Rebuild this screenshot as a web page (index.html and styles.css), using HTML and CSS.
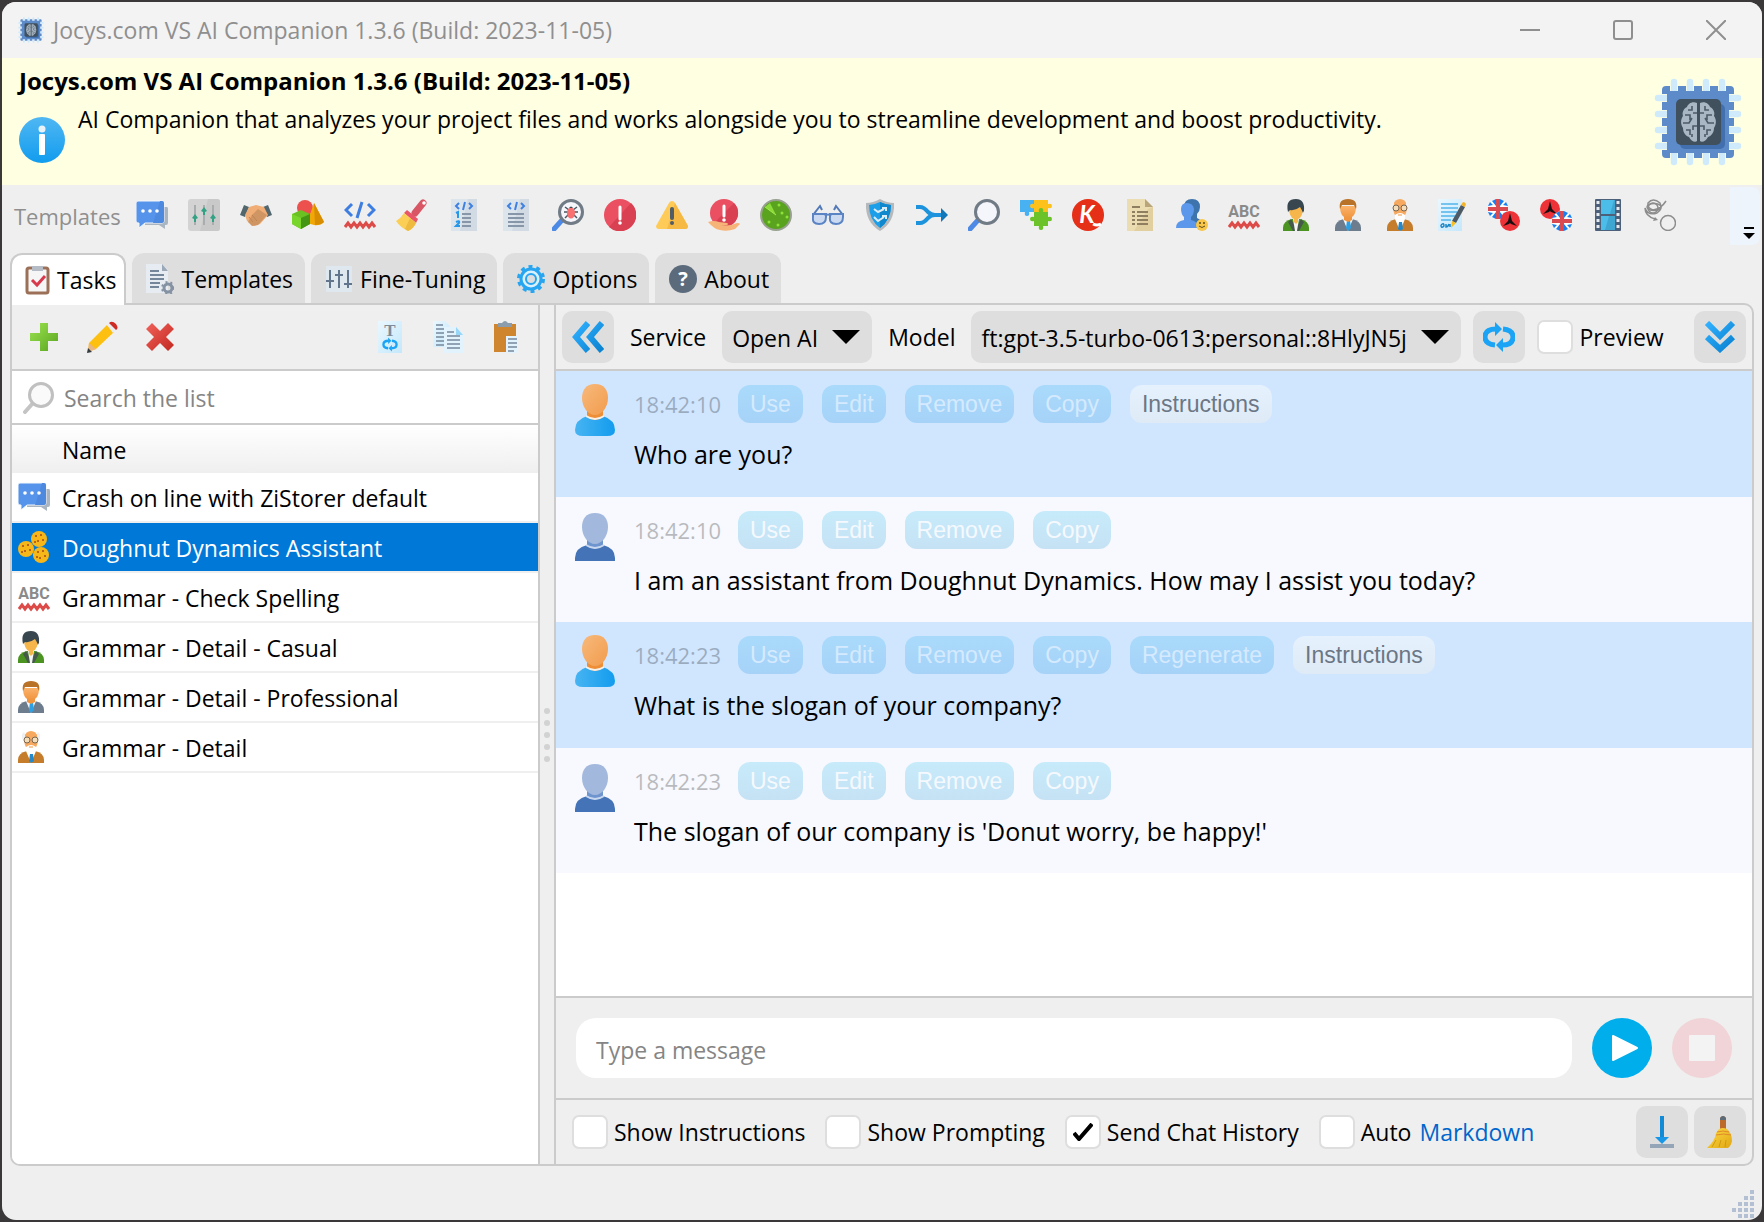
FILE: index.html
```html
<!DOCTYPE html>
<html lang="en">

<head>
    <meta charset="UTF-8">
    <meta name="viewport" content="width=device-width, initial-scale=1.0">
    <title>Jocys.com VS AI Companion</title>
    <link rel="stylesheet" href="styles.css">
</head>

<body>
    <!-- Shared icons -->
    <svg class="sprite" aria-hidden="true">
        <defs>
            <linearGradient id="gInfo" x1="0" y1="0" x2="0" y2="1"><stop offset="0" stop-color="#50b7f3"/><stop offset="1" stop-color="#119cee"/></linearGradient>
            <linearGradient id="gBlue" x1="0" y1="0" x2="1" y2="1"><stop offset="0" stop-color="#2fb0ff"/><stop offset="1" stop-color="#0a82d0"/></linearGradient>
            <linearGradient id="gUser" x1="0" y1="0" x2="1" y2="0"><stop offset="0" stop-color="#47b4f2"/><stop offset="1" stop-color="#139cee"/></linearGradient>
            <linearGradient id="gHead" x1="0" y1="0" x2="1" y2="1"><stop offset="0" stop-color="#f7b97c"/><stop offset="1" stop-color="#f29c4c"/></linearGradient>
            <linearGradient id="gGreen" x1="0" y1="0" x2="1" y2="1"><stop offset="0" stop-color="#9be350"/><stop offset="1" stop-color="#5aa520"/></linearGradient>
            <linearGradient id="gRed" x1="0" y1="0" x2="1" y2="1"><stop offset="0" stop-color="#f1625a"/><stop offset="1" stop-color="#c2271f"/></linearGradient>
            <linearGradient id="gPaper" x1="0" y1="0" x2="1" y2="1"><stop offset="0" stop-color="#eaf7fe"/><stop offset="1" stop-color="#c4e8fc"/></linearGradient>
            <linearGradient id="gFace" x1="0" y1="0" x2="0" y2="1"><stop offset="0" stop-color="#fbb36a"/><stop offset="1" stop-color="#f0953f"/></linearGradient>
            <linearGradient id="gBroom" x1="0" y1="0" x2="1" y2="1"><stop offset="0" stop-color="#ffdc45"/><stop offset="1" stop-color="#e0a613"/></linearGradient>
        </defs>
        <symbol id="chip" viewBox="0 0 88 88">
            <g stroke="#cfebfb" stroke-width="6.5" stroke-linecap="round">
                <path d="M20 4v80M36 4v80M52 4v80M68 4v80M4 20h80M4 36h80M4 52h80M4 68h80"/>
            </g>
            <path d="M12 8h4v5h8V8h8v5h8V8h8v5h8V8h8v5h8V8h4q4 0 4 4v4h-5v8h5v8h-5v8h5v8h-5v8h5v8h-5v8h5v4q0 4-4 4h-4v-5h-8v5h-8v-5h-8v5h-8v-5h-8v5h-8v-5h-8v5h-4q-4 0-4-4v-4h5v-8H8v-8h5v-8H8v-8h5v-8H8v-8h5v-8H8v-4q0-4 4-4z" fill="#5d8bc9"/>
            <rect x="26" y="26" width="45" height="45" rx="5" fill="#426fae"/>
            <rect x="22" y="21" width="45" height="46" rx="5" fill="#40515d"/>
            <path d="M43 25c-5-2-9 1-10 4-4 2-5 6-4 9-3 4-2 9 0 12 0 5 3 8 6 9 2 4 6 6 8 4zM46 25c5-2 9 1 10 4 4 2 5 6 4 9 3 4 2 9 0 12 0 5-3 8-6 9-2 4-6 6-8 4z" fill="#a9b6c3"/>
            <path d="M38 28v4h-4M31 37h5v5M29 45h6l3-5M32 52h4v5M43 35h-4M43 48h-4v4M38 59v-3M51 28v4h4M58 37h-5v5M60 45h-6l-3-5M57 52h-4v5M46 35h4M46 48h4v4M51 59v-3" fill="none" stroke="#4b5b67" stroke-width="1.6"/>
        </symbol>
        <symbol id="chat" viewBox="0 0 32 32">
            <path d="M9 8h22q1 0 1 2v14q0 2-2 2h-1v4l-6-4H9z" fill="#aab5c2"/>
            <path d="M2 2h24q2 0 2 2v18q0 2-2 2H9l-6 5v-5H2q-2 0-2-2V4q0-2 2-2z" fill="#5694ec" stroke="#f3f6fa" stroke-width="1"/>
            <path d="M26 2q2 0 2 2v18q0 2-2 2h-9L24 2z" fill="#4d89df"/>
            <circle cx="7" cy="12" r="1.8" fill="#fff"/><circle cx="14" cy="12" r="1.8" fill="#fff"/><circle cx="21" cy="12" r="1.8" fill="#fff"/>
        </symbol>
        <symbol id="lens" viewBox="0 0 32 32">
            <path d="M2 30l9-10" stroke="#4d8ae6" stroke-width="5" stroke-linecap="round"/>
            <circle cx="19" cy="13" r="11.5" fill="#f4f6fb" stroke="#707b86" stroke-width="3"/>
        </symbol>
        <symbol id="casual" viewBox="0 0 32 32">
            <path d="M3 32v-3q0-7 9-9h8q9 2 9 9v3z" fill="#4b9422"/>
            <path d="M11 20l5 9 5-9 3 3-5 9h-6l-5-9z" fill="#455a4a"/>
            <path d="M13 20h6l-2 12h-2z" fill="#f4f4f4"/>
            <path d="M9 8q0 10 5 12v3l2 2 2-2v-3q5-2 5-12z" fill="#f6b64c"/>
            <path d="M8 13q-3-13 8-13 9 0 8 12-1 1-1 2-1-3-3-6-5 4-10 3z" fill="#38464f"/>
        </symbol>
        <symbol id="suit" viewBox="0 0 32 32">
            <path d="M3 32v-3q0-7 9-9h8q9 2 9 9v3z" fill="#6d7d8e"/>
            <path d="M11 20l5 12 5-12z" fill="#f5f8fb"/>
            <path d="M15 21h3l1 8-3 3-2-3z" fill="#2da0e4"/>
            <path d="M12 15h8v6l-4 2-4-2z" fill="#ef9540"/>
            <path d="M8 7q0 12 8 12t8-12z" fill="url(#gFace)"/>
            <path d="M8 10q-2-10 8-10t8 10l-2-4H10z" fill="#b97329"/>
        </symbol>
        <symbol id="elder" viewBox="0 0 32 32">
            <path d="M3 32v-3q0-7 9-9h8q9 2 9 9v3z" fill="#c57d2c"/>
            <path d="M11 20l5 12 5-12z" fill="#fff"/>
            <path d="M15 23h3l1 7-3 2-2-2z" fill="#2589c9"/>
            <path d="M9 6q0 13 7 13t7-13q-2-6-7-6T9 6z" fill="#f7a960"/>
            <path d="M9 1Q5 4 8 9l2-2V3zM23 1q4 3 1 8l-2-2V3z" fill="#f0f0f0"/>
            <circle cx="12" cy="9" r="3" fill="#f6ddb9" stroke="#776552"/><circle cx="20" cy="9" r="3" fill="#f6ddb9" stroke="#776552"/>
            <path d="M11 16q5-4 10 0 1 6-5 6t-5-6z" fill="#fff"/>
            <path d="M14 16h4" stroke="#f0953f" stroke-width="1"/>
        </symbol>
        <symbol id="userHead" viewBox="0 0 40 52">
            <path d="M0 46q0-10 12-14h16q12 4 12 14 0 6-8 6H8q-8 0-8-6z" fill="url(#gUser)"/>
            <path d="M12 26h16v7q-8 6-16 0z" fill="#ee8f38"/>
            <path d="M11 32q9 6 18 0" fill="none" stroke="#f6f1ea" stroke-width="2"/>
            <path d="M20 0c9 0 13 6 13 14 0 9-6 17-13 17S7 23 7 14C7 6 11 0 20 0z" fill="url(#gHead)"/>
        </symbol>
        <symbol id="botHead" viewBox="0 0 40 48">
            <path d="M0 48v-3q0-10 12-13h16q12 3 12 13v3z" fill="#4573b8"/>
            <path d="M12 26h16v7q-8 6-16 0z" fill="#6f95cf"/>
            <path d="M11 32q9 6 18 0" fill="none" stroke="#c9d8ef" stroke-width="2"/>
            <path d="M20 0c9 0 13 6 13 14 0 9-6 17-13 17S7 23 7 14C7 6 11 0 20 0z" fill="#a3b8dd"/>
        </symbol>
        <symbol id="refresh" viewBox="0 0 32 32">
            <path d="M12 24Q2 23 2 16 2 8 13 8M20 8q10 1 10 8 0 8-11 8" fill="none" stroke="#1ba4f5" stroke-width="5"/>
            <path d="M12 1l7 7-7 7zM20 17l-7 7 7 7z" fill="#1ba4f5"/>
        </symbol>
        <symbol id="flag" viewBox="0 0 20 20">
            <circle cx="10" cy="10" r="10" fill="#fff"/>
            <path d="M4 2l4 5V0zM16 2l-4 5V0zM0 7l5-1-3-3zM20 7l-5-1 3-3zM4 18l4-5v7zM16 18l-4-5v7zM0 13l5 1-3 3zM20 13l-5 1 3 3z" fill="#1680f0"/>
            <path d="M10 0v20M0 10h20" stroke="#d94a51" stroke-width="4"/>
        </symbol>
        <symbol id="trefoil" viewBox="0 0 20 20">
            <circle cx="10" cy="10" r="10" fill="#ee3338"/>
            <path d="M10 2l2 8 5 5-6-2-1-1-1 1-6 2 5-5z" fill="#1a0e10"/>
        </symbol>
    </svg>

    <div class="window">
        <header class="titlebar">
            <svg class="icon-app"><use href="#chip"/></svg>
            <span class="title">Jocys.com VS AI Companion 1.3.6 (Build: 2023-11-05)</span>
            <button class="caption" aria-label="Minimize"><svg width="20" height="20"><path d="M0 10h20" stroke="#8f8f8f" stroke-width="2"/></svg></button>
            <button class="caption" aria-label="Maximize"><svg width="20" height="20"><rect x="1" y="1" width="18" height="18" rx="2" fill="none" stroke="#8f8f8f" stroke-width="2"/></svg></button>
            <button class="caption" aria-label="Close"><svg width="20" height="20"><path d="M0 0l20 20M20 0L0 20" stroke="#8f8f8f" stroke-width="2"/></svg></button>
        </header>

        <section class="banner">
            <h1>Jocys.com VS AI Companion 1.3.6 (Build: 2023-11-05)</h1>
            <svg class="icon-info" viewBox="0 0 46 46">
                <circle cx="23" cy="23" r="23" fill="url(#gInfo)"/>
                <circle cx="23" cy="12" r="3.5" fill="#e9f2f9"/>
                <rect x="20" y="17" width="6" height="21" rx="1" fill="#fff"/>
            </svg>
            <p>AI Companion that analyzes your project files and works alongside you to streamline development and boost productivity.</p>
            <svg class="logo"><use href="#chip"/></svg>
        </section>

        <nav class="templates">
            <span class="templates-label">Templates</span>
            <button aria-label="Chat"><svg><use href="#chat"/></svg></button>
            <button aria-label="Sliders"><svg viewBox="0 0 32 32">
                <rect width="32" height="32" rx="3" fill="#d3d3d3"/><path d="M20 0h9q3 0 3 3v26q0 3-3 3H12z" fill="#c9c9c9"/>
                <path d="M7 6v20M16 6v20M25 6v20" stroke="#a9adae" stroke-width="2"/>
                <path d="M4 19l3-4 3 4-2 1v3H6v-3zM13 12l3-4 3 4-2 1v3h-2v-3zM22 19l3-4 3 4-2 1v3h-2v-3z" fill="#32a284"/></svg></button>
            <button aria-label="Handshake"><svg viewBox="0 0 32 32">
                <path d="M0 16L4 6l5 2-4 10zM32 16L28 6l-5 2 4 10z" fill="#52666e"/>
                <path d="M5 16L9 8l7-2 8 2 4 8-8 9-6 2-7-5z" fill="#f0ad75"/>
                <path d="M12 16l6-6 9 6-9 10-6 1-4-4z" fill="#cf9664"/><path d="M9 18l4 5M12 16l5 6" stroke="#bd8555" stroke-width="1"/></svg></button>
            <button aria-label="Shapes"><svg viewBox="0 0 32 32">
                <circle cx="13" cy="9" r="8" fill="#ec514d"/><path d="M22 4l10 19q-4 4-10 3l-7-2z" fill="#f1a806"/><path d="M22 4l1 22q6 0 9-3z" fill="#d88d00"/>
                <path d="M0 15l9-4 9 4v10l-9 5-9-5z" fill="#6bc022"/><path d="M0 15l9 4v11l-9-5z" fill="#79d42c"/><path d="M9 19l9-4v10l-9 5z" fill="#469615"/></svg></button>
            <button aria-label="Code spelling"><svg viewBox="0 0 32 32">
                <path d="M8 5L2 11l6 6M24 5l6 6-6 6M18 3l-5 16" fill="none" stroke="#3d7ee0" stroke-width="3"/>
                <path d="M1 28l3-4 3 4 3-4 3 4 3-4 3 4 3-4 3 4 3-4 3 4" fill="none" stroke="#dc4b48" stroke-width="3"/></svg></button>
            <button aria-label="Brush"><svg viewBox="0 0 32 32">
                <path d="M19 14l8-10" stroke="#d95765" stroke-width="7" stroke-linecap="round"/><circle cx="28" cy="4" r="1.8" fill="#fff"/>
                <path d="M11 11l11 9-2 4-12-10z" fill="#e85668"/><path d="M8 14l12 10q-3 6-8 8Q4 28 0 22q5-3 8-8z" fill="#fbcf55"/><path d="M14 19l6 5q-3 6-8 8l-3-2z" fill="#eebb40"/></svg></button>
            <button aria-label="Numbered code"><svg viewBox="0 0 32 32">
                <path d="M3 0h26v32H3z" fill="#dce4ec"/><path d="M20 0h9v32H12z" fill="#d2dae3"/><path d="M11 4L8 7l3 3M21 4l3 3-3 3M17 3l-2 8" fill="none" stroke="#3e81e2" stroke-width="2"/>
                <path d="M14 15h9M14 19h9M14 23h9M14 27h9" stroke="#8796a8" stroke-width="2"/><path d="M8 14l2-1v6M8 23q4-2 3 1l-3 3h4" fill="none" stroke="#2797e8" stroke-width="2"/></svg></button>
            <button aria-label="Code document"><svg viewBox="0 0 32 32">
                <path d="M3 0h26v32H3z" fill="#dce4ec"/><path d="M20 0h9v32H12z" fill="#d2dae3"/><path d="M11 4L8 7l3 3M21 4l3 3-3 3M17 3l-2 8" fill="none" stroke="#3e81e2" stroke-width="2"/>
                <path d="M8 15h16M8 19h16M8 23h16M8 27h16" stroke="#8796a8" stroke-width="2"/></svg></button>
            <button aria-label="Find bugs"><svg viewBox="0 0 32 32"><use href="#lens"/>
                <path d="M13 8l4 3M25 8l-4 3M12 13h14M13 19l4-4M25 19l-4-4" stroke="#4a5660" stroke-width="1.5"/><ellipse cx="19" cy="14" rx="4" ry="5.5" fill="#f87070"/><path d="M17 9q2-3 4 0z" fill="#3f4a52"/></svg></button>
            <button aria-label="Error"><svg viewBox="0 0 32 32">
                <circle cx="16" cy="16" r="16" fill="#ea5061"/><path d="M27 4A16 16 0 0 1 5 28z" fill="#d94052"/><path d="M16 8v12" stroke="#fff" stroke-width="3" stroke-linecap="round"/><circle cx="16" cy="24" r="1.8" fill="#fff"/></svg></button>
            <button aria-label="Warning"><svg viewBox="0 0 32 32">
                <path d="M16 2q2 0 3 2l13 23q0 3-3 3H3q-3 0-3-3L13 4q1-2 3-2z" fill="#ffcb58"/><path d="M19 4l13 23q0 3-3 3H11z" fill="#f5b944"/><path d="M16 10v9" stroke="#505c66" stroke-width="4" stroke-linecap="round"/><circle cx="16" cy="24" r="2" fill="#505c66"/></svg></button>
            <button aria-label="Issue help"><svg viewBox="0 0 32 32">
                <circle cx="16" cy="14" r="14" fill="#ea5061"/><path d="M26 4A14 14 0 0 1 6 24z" fill="#d94052"/><path d="M16 7v10" stroke="#fff" stroke-width="3" stroke-linecap="round"/><circle cx="16" cy="21" r="1.8" fill="#fff"/>
                <path d="M0 23q6-2 11 0l8 1q2 1 0 2l-6 1 10-1 6-2q3 0 3 1l-5 5q-8 3-15 1-6-1-12-8z" fill="#f6b479"/></svg></button>
            <button aria-label="Radar"><svg viewBox="0 0 32 32">
                <circle cx="16" cy="16" r="15" fill="#5aa31f" stroke="#98a08f" stroke-width="2"/><path d="M16 16L5 8l5-4z" fill="#8bdc3a"/><path d="M16 16L5 8" stroke="#a3ea4c"/>
                <g fill="#8ee03a"><circle cx="19" cy="6" r="1.5"/><circle cx="22" cy="14" r="1.5"/><circle cx="27" cy="18" r="1.5"/><circle cx="9" cy="23" r="1.5"/><circle cx="18" cy="26" r="1.5"/></g></svg></button>
            <button aria-label="Review"><svg viewBox="0 0 32 32">
                <path d="M1 16L8 7l2 4M31 16L24 7l-2 4" fill="none" stroke="#5279b8" stroke-width="2"/><path d="M1 15h13v3q0 7-7 7t-6-7zM18 15h13v3q0 7-7 7t-6-7z" fill="#cbdaf0" stroke="#5b84c4" stroke-width="2"/><path d="M13 17q3-3 6 0" fill="none" stroke="#5b84c4" stroke-width="2"/></svg></button>
            <button aria-label="Security"><svg viewBox="0 0 32 32">
                <path d="M16 0q7 4 14 4 1 19-14 28Q1 23 2 4q7 0 14-4z" fill="#b6b9bb"/><path d="M16 3q6 3 11 3 0 15-11 23Q5 21 5 6q5 0 11-3z" fill="#1c9ee8"/><path d="M16 3v26q11-8 11-23-5 0-11-3z" fill="#0f88ce"/>
                <path d="M10 10l4 3 6-3M10 18l4 4 6-4M18 9h4v3M18 17h4v3" fill="none" stroke="#dcecf7" stroke-width="2"/></svg></button>
            <button aria-label="Merge"><svg viewBox="0 0 32 32">
                <path d="M0 8h4q4 0 8 5 3 3 7 3h6M0 24h4q4 0 8-5 3-3 7-3" fill="none" stroke="#1c93dc" stroke-width="4"/><path d="M25 9l7 7-7 7z" fill="#1376b8"/></svg></button>
            <button aria-label="Search"><svg><use href="#lens"/></svg></button>
            <button aria-label="Plugins"><svg viewBox="0 0 32 32">
                <path d="M0 1h14v12h-5q1 4-2 4t-2-4H0z" fill="#47b1f2"/><path d="M14 1h14v4q4-1 4 2t-4 2v4H14V9q-4 1-4-2t4-2z" fill="#fdc11c"/><path d="M14 13h5q-1-4 2-4t2 4h5v5q4-1 4 2t-4 2v5h-5q1 4-2 4t-2-4h-5v-5q-4 1-4-2t4-2z" fill="#6cc229"/></svg></button>
            <button aria-label="Keyword"><svg viewBox="0 0 32 32">
                <circle cx="16" cy="16" r="16" fill="#e52f17"/><text x="15" y="24" text-anchor="middle" class="k-text">K</text><path d="M21 25q4 2 8 0" stroke="#fff" stroke-width="3" fill="none"/></svg></button>
            <button aria-label="Document"><svg viewBox="0 0 32 32">
                <path d="M3 0h18l8 8v24H3z" fill="#ecdcb2"/><path d="M24 10l5-2v24H10z" fill="#e2cfa0"/><path d="M21 0l8 8h-8z" fill="#b9a57a"/><path d="M8 8h8M8 13h3M13 13h11M8 17h3M13 17h11M8 21h3M13 21h11M8 25h3M13 25h11" stroke="#8f7f60" stroke-width="2"/></svg></button>
            <button aria-label="People"><svg viewBox="0 0 32 32">
                <path d="M8 8q0-8 8-8t8 8q0 4-3 7v4l9 5v3H14z" fill="#3e74ad"/><path d="M5 10q0-6 6-6t7 6q0 5-3 8v3q7 1 7 8H0q0-7 8-8v-3q-3-3-3-8z" fill="#5b98ec"/>
                <circle cx="26" cy="26" r="6" fill="#f8c749"/><circle cx="24" cy="24" r="1" fill="#5d4a20"/><circle cx="28" cy="24" r="1" fill="#5d4a20"/><path d="M23 27q3 3 6 0" stroke="#5d4a20" fill="none"/></svg></button>
            <button aria-label="Spelling"><svg viewBox="0 0 32 32">
                <text x="16" y="18" text-anchor="middle" class="abc-text">ABC</text><path d="M1 28l3-4 3 4 3-4 3 4 3-4 3 4 3-4 3 4 3-4 3 4" fill="none" stroke="#dc4b48" stroke-width="3"/></svg></button>
            <button aria-label="Casual"><svg><use href="#casual"/></svg></button>
            <button aria-label="Professional"><svg><use href="#suit"/></svg></button>
            <button aria-label="Detail"><svg><use href="#elder"/></svg></button>
            <button aria-label="Letter"><svg viewBox="0 0 32 32">
                <path d="M2 0h24v32H2z" fill="url(#gPaper)"/><path d="M5 5h17M5 9h17M5 13h16M5 17h14M5 21h10" stroke="#52b4ea" stroke-width="1.5"/><path d="M5 26q3-3 3 1-3 3-3-1M10 25v3q2 0 3-3M14 28v-3" stroke="#1a87c7" stroke-width="1.5" fill="none"/>
                <path d="M16 22l9-16 4 2-9 16z" fill="#4d5964"/><path d="M25 6l2-3q2 0 3 2l-1 3z" fill="#f5b32a"/><path d="M16 22l4 2-5 5z" fill="#f9c024"/></svg></button>
            <button aria-label="English to Klingon"><svg viewBox="0 0 32 32"><use href="#flag" width="20" height="20"/><use href="#trefoil" x="12" y="12" width="20" height="20"/></svg></button>
            <button aria-label="Klingon to English"><svg viewBox="0 0 32 32"><use href="#trefoil" width="20" height="20"/><use href="#flag" x="12" y="12" width="20" height="20"/></svg></button>
            <button aria-label="Video"><svg viewBox="0 0 32 32">
                <rect x="3" width="26" height="32" rx="1" fill="#4c6079"/><path d="M9 1h14v14H9zM9 17h14v14H9z" fill="#4bbde8"/><path d="M23 1v14h-5l4-14zM17 17h6v14h-10z" fill="#3fa6d2"/><path d="M6 2v30M26 2v30" stroke="#e6ebf0" stroke-width="3" stroke-dasharray="3 3"/></svg></button>
            <button aria-label="Simplify"><svg viewBox="0 0 32 32">
                <g fill="none" stroke="#8d8d8d" stroke-width="1.5"><circle cx="24" cy="24" r="7.5"/><circle cx="9" cy="9" r="5"/><ellipse cx="10" cy="8" rx="7" ry="3.5"/><path d="M22 2q-5 8-13 9-6-2-5-7Q9-2 16 4q3 6-3 10Q4 17 1 9q0 8 10 11"/></g><path d="M14 21l-5 1 2-4z" fill="#8d8d8d"/></svg></button>
            <button class="overflow" aria-label="More templates"><svg viewBox="0 0 12 12"><path d="M1 1h10" stroke="#000" stroke-width="2"/><path d="M0 6h12l-6 6z"/></svg></button>
        </nav>

        <div class="tabs" role="tablist">
            <button class="tab active" role="tab" aria-selected="true">
                <svg viewBox="0 0 28 30"><rect x="3" y="3" width="21" height="25" rx="2" fill="#f6f6f6" stroke="#9b7057" stroke-width="3"/><path d="M8 1h11v5H8z" fill="#b5bcc6"/><path d="M8 15l5 5 8-9" fill="none" stroke="#d8394c" stroke-width="3"/></svg>
                Tasks</button>
            <button class="tab" role="tab">
                <svg viewBox="0 0 28 30"><path d="M0 0h16l6 6v23H0z" fill="#e6ecf2"/><path d="M16 0l6 7h-6z" fill="#9aa8b8"/><path d="M4 7h9M4 11h14M4 15h14M4 19h10M4 23h9" stroke="#75869b" stroke-width="2"/><circle cx="22" cy="24" r="4" fill="none" stroke="#8492a3" stroke-width="3"/><circle cx="22" cy="24" r="6" fill="none" stroke="#8492a3" stroke-width="2" stroke-dasharray="2 3"/></svg>
                Templates</button>
            <button class="tab" role="tab">
                <svg viewBox="0 0 28 30"><path d="M1 2h26v26H1z" fill="#dfe7ef"/><path d="M5 6v18M14 6v18M23 6v18M1 17h8M10 11h8M19 20h8" stroke="#63758d" stroke-width="2"/></svg>
                Fine-Tuning</button>
            <button class="tab" role="tab">
                <svg viewBox="0 0 28 30"><circle cx="14" cy="15" r="10" fill="#d9f0fd" stroke="#27a5f0" stroke-width="3"/><circle cx="14" cy="15" r="12.5" fill="none" stroke="#27a5f0" stroke-width="3" stroke-dasharray="4 4"/><circle cx="14" cy="15" r="5" fill="#dedede" stroke="#27a5f0" stroke-width="2"/></svg>
                Options</button>
            <button class="tab" role="tab">
                <svg viewBox="0 0 28 30"><circle cx="14" cy="15" r="14" fill="#5b6b7c"/><text x="14" y="22" text-anchor="middle" class="q-text">?</text></svg>
                About</button>
        </div>

        <main class="workspace">
            <aside class="list-panel">
                <div class="list-tools">
                    <button aria-label="Add"><svg viewBox="0 0 32 32"><path d="M12 2h8v10h10v8H20v10h-8V20H2v-8h10z" fill="url(#gGreen)"/></svg></button>
                    <button aria-label="Edit"><svg viewBox="0 0 32 32"><path d="M3 22L21 4l7 7-18 17-8 3z" fill="#fdbf10"/><path d="M3 22l7 6-8 3z" fill="#e9b584"/><path d="M1 32l1-5 4 4z" fill="#333a40"/><path d="M21 4l3-2 6 6-3 4z" fill="#e9edf0"/><path d="M23 2q3-3 7 1 3 4 0 6z" fill="#cf2b25"/></svg></button>
                    <button aria-label="Delete"><svg viewBox="0 0 32 32"><path d="M8 2l8 8 8-8 6 6-8 8 8 8-6 6-8-8-8 8-6-6 8-8-8-8z" fill="url(#gRed)"/></svg></button>
                    <span class="spacer"></span>
                    <button aria-label="Rename"><svg viewBox="0 0 32 32"><path d="M4 0h24v32H4z" fill="url(#gPaper)"/><text x="16" y="15" text-anchor="middle" class="t-text">T</text><use href="#refresh" x="8" y="16" width="16" height="15"/></svg></button>
                    <button aria-label="Copy"><svg viewBox="0 0 32 32"><path d="M1 0h12l5 5v21H1z" fill="url(#gPaper)"/><path d="M4 4h7M4 8h8M4 12h8M4 16h8M4 20h8M4 24h8" stroke="#76889b" stroke-width="1.5"/><path d="M12 6h13l6 7v19H12z" fill="#e3f3fd"/><path d="M24 6l7 8h-7z" fill="#98d6f8"/><path d="M15 11h7M15 15h13M15 19h13M15 23h13M15 27h13" stroke="#76889b" stroke-width="1.5"/></svg></button>
                    <button aria-label="Paste"><svg viewBox="0 0 32 32"><path d="M4 3h22v28H4z" fill="#cf852e"/><path d="M8 6V2h4q3-4 6 0h4v4z" fill="#8b9cac"/><path d="M16 15h12v17H16z" fill="#e3f3fd"/><path d="M18 18h9M18 22h9M18 26h9M18 30h6" stroke="#76889b" stroke-width="1.5"/></svg></button>
                </div>
                <label class="search">
                    <svg viewBox="0 0 32 32"><path d="M3 30l8-9" stroke="#c4c4c4" stroke-width="4" stroke-linecap="round"/><circle cx="19" cy="13" r="11.5" fill="#fafafa" stroke="#c0c0c0" stroke-width="3"/></svg>
                    <input type="text" placeholder="Search the list" aria-label="Search the list">
                </label>
                <table>
                    <thead>
                        <tr><th class="cell-icon"></th><th>Name</th></tr>
                    </thead>
                    <tbody>
                        <tr><td class="cell-icon"><svg><use href="#chat"/></svg></td><td>Crash on line with ZiStorer default</td></tr>
                        <tr class="selected"><td class="cell-icon"><svg viewBox="0 0 32 32">
                            <g fill="#f7b718"><circle cx="21" cy="8" r="8"/><circle cx="8" cy="18" r="8"/><circle cx="23" cy="24" r="8"/></g>
                            <g fill="#a54a1a"><circle cx="18" cy="5" r="1"/><circle cx="23" cy="4" r="1"/><circle cx="25" cy="9" r="1"/><circle cx="20" cy="10" r="1"/><circle cx="17" cy="11" r="1"/><circle cx="5" cy="15" r="1"/><circle cx="10" cy="14" r="1"/><circle cx="12" cy="19" r="1"/><circle cx="7" cy="20" r="1"/><circle cx="4" cy="21" r="1"/><circle cx="20" cy="21" r="1"/><circle cx="25" cy="20" r="1"/><circle cx="27" cy="25" r="1"/><circle cx="22" cy="27" r="1"/><circle cx="19" cy="26" r="1"/></g></svg></td><td>Doughnut Dynamics Assistant</td></tr>
                        <tr><td class="cell-icon"><svg viewBox="0 0 32 32">
                            <text x="16" y="18" text-anchor="middle" class="abc-text">ABC</text><path d="M1 28l3-4 3 4 3-4 3 4 3-4 3 4 3-4 3 4 3-4 3 4" fill="none" stroke="#dc4b48" stroke-width="3"/></svg></td><td>Grammar - Check Spelling</td></tr>
                        <tr><td class="cell-icon person"><svg><use href="#casual"/></svg></td><td>Grammar - Detail - Casual</td></tr>
                        <tr><td class="cell-icon person"><svg><use href="#suit"/></svg></td><td>Grammar - Detail - Professional</td></tr>
                        <tr><td class="cell-icon person"><svg><use href="#elder"/></svg></td><td>Grammar - Detail</td></tr>
                    </tbody>
                </table>
            </aside>

            <div class="splitter"><i></i><i></i><i></i><i></i><i></i></div>

            <section class="chat-panel">
                <div class="chat-tools">
                    <button class="square" aria-label="Collapse list"><svg viewBox="0 0 32 32"><path d="M16 2L4 16l12 14M30 2L18 16l12 14" fill="none" stroke="url(#gBlue)" stroke-width="6"/></svg></button>
                    <label class="service-label" for="service">Service</label>
                    <span class="combo"><select id="service"><option>Open AI</option></select><svg viewBox="0 0 28 14"><path d="M0 0h28L14 14z"/></svg></span>
                    <label class="model-label" for="model">Model</label>
                    <span class="combo"><select id="model"><option>ft:gpt-3.5-turbo-0613:personal::8HlyJN5j</option></select><svg viewBox="0 0 28 14"><path d="M0 0h28L14 14z"/></svg></span>
                    <button class="square refresh" aria-label="Refresh models"><svg><use href="#refresh"/></svg></button>
                    <label class="check"><input type="checkbox">Preview</label>
                    <span class="spacer"></span>
                    <button class="square" aria-label="Expand"><svg viewBox="0 0 32 32"><path d="M3 2l13 13L29 2M3 16l13 12 13-12" fill="none" stroke="url(#gBlue)" stroke-width="6"/></svg></button>
                </div>

                <div class="messages">
                    <article class="message user">
                        <svg class="avatar"><use href="#userHead"/></svg>
                        <div class="content">
                            <div class="actions"><time>18:42:10</time><button>Use</button><button>Edit</button><button>Remove</button><button>Copy</button><button class="light">Instructions</button></div>
                            <p>Who are you?</p>
                        </div>
                    </article>
                    <article class="message">
                        <svg class="avatar"><use href="#botHead"/></svg>
                        <div class="content">
                            <div class="actions"><time>18:42:10</time><button>Use</button><button>Edit</button><button>Remove</button><button>Copy</button></div>
                            <p>I am an assistant from Doughnut Dynamics. How may I assist you today?</p>
                        </div>
                    </article>
                    <article class="message user">
                        <svg class="avatar"><use href="#userHead"/></svg>
                        <div class="content">
                            <div class="actions"><time>18:42:23</time><button>Use</button><button>Edit</button><button>Remove</button><button>Copy</button><button>Regenerate</button><button class="light">Instructions</button></div>
                            <p>What is the slogan of your company?</p>
                        </div>
                    </article>
                    <article class="message">
                        <svg class="avatar"><use href="#botHead"/></svg>
                        <div class="content">
                            <div class="actions"><time>18:42:23</time><button>Use</button><button>Edit</button><button>Remove</button><button>Copy</button></div>
                            <p>The slogan of our company is 'Donut worry, be happy!'</p>
                        </div>
                    </article>
                </div>

                <form class="composer">
                    <input type="text" placeholder="Type a message" aria-label="Message">
                    <button type="button" aria-label="Send"><svg viewBox="0 0 60 60"><circle cx="30" cy="30" r="30" fill="#00aeec"/><path d="M21 18v24l24-12z" fill="#fff" stroke="#fff" stroke-width="2" stroke-linejoin="round"/></svg></button>
                    <button type="button" aria-label="Stop"><svg viewBox="0 0 60 60"><circle cx="30" cy="30" r="30" fill="#f0d4d7"/><rect x="17" y="17" width="26" height="26" rx="1" fill="#f3f3f3"/></svg></button>
                </form>

                <div class="options">
                    <label class="check"><input type="checkbox">Show Instructions</label>
                    <label class="check"><input type="checkbox">Show Prompting</label>
                    <label class="check"><input type="checkbox" checked>Send Chat History</label>
                    <label class="check"><input type="checkbox">Auto</label>
                    <a href="#markdown">Markdown</a>
                    <span class="spacer"></span>
                    <button class="square" aria-label="Scroll to bottom"><svg viewBox="0 0 32 32"><path d="M16 0v24" stroke="#118bd6" stroke-width="4"/><path d="M9 21h14l-7 7z" fill="#1797e6"/><path d="M4 30h24" stroke="#93a5b6" stroke-width="4"/></svg></button>
                    <button class="square" aria-label="Clear messages"><svg viewBox="0 0 32 32"><path d="M16 2q3-4 6 0v12h-6z" fill="#bd6b2d"/><path d="M16 4V2q3-4 6 0v2z" fill="#5d6b78"/><path d="M15 13q4-2 8 0 5 4 5 12-1 5-4 7H3q8-7 9-15z" fill="url(#gBroom)"/><path d="M13 16q6-2 12 0M12 19q8-2 15 0" fill="none" stroke="#e08a2a" stroke-width="1"/><path d="M12 24l-4 7M17 24l-2 7M22 24l-1 7" stroke="#cf9a13"/></svg></button>
                </div>
            </section>
        </main>

        <footer class="statusbar">
            <svg viewBox="0 0 30 30"><path d="M20 4h4M14 10h10M8 16h16M2 22h22M8 28h16" stroke="#b3bfd2" stroke-width="4" stroke-dasharray="4 2"/></svg>
        </footer>
    </div>
</body>

</html>
```
FILE: styles.css
```css
* {
    box-sizing: border-box;
}

body {
    margin: 0;
    height: 100vh;
    padding: 2px;
    background-color: #3a3839;
    font-family: "Open Sans", "Noto Sans", sans-serif;
    font-size: 23px;
    line-height: 30px;
    color: #000;
}

button,
input,
select {
    font: inherit;
    color: inherit;
    border: none;
    padding: 0;
    background: none;
}

h1,
p {
    margin: 0;
}

svg {
    display: block;
    flex: none;
}

.sprite {
    position: absolute;
    width: 0;
    height: 0;
}

.spacer {
    flex: 1;
}

.window {
    height: 100%;
    display: flex;
    flex-direction: column;
    background-color: #efefef;
    border-radius: 14px;
    overflow: hidden;
}

/* Title bar */
.titlebar {
    display: flex;
    align-items: center;
    height: 56px;
    padding-left: 16px;
    background-color: #f3f3f3;
    color: #8f8f8f;
}

.icon-app {
    width: 26px;
    height: 26px;
    margin-right: 9px;
}

.title {
    flex: 1;
}

.caption {
    display: flex;
    justify-content: center;
    align-items: center;
    width: 93px;
    height: 56px;
}

/* Banner */
.banner {
    display: grid;
    grid-template-columns: 46px 1fr 88px;
    grid-template-rows: 38px 1fr;
    column-gap: 13px;
    height: 127px;
    padding: 8px 20px 8px 17px;
    background-color: #ffffe1;
}

.banner h1 {
    grid-column: 1 / 3;
    font-size: 24px;
    font-weight: bold;
    line-height: 30px;
}

.icon-info {
    width: 46px;
    height: 46px;
    margin-top: 13px;
    grid-row: 2;
}

.logo {
    grid-column: 3;
    grid-row: 1 / 3;
    align-self: center;
    width: 88px;
    height: 88px;
}

/* Templates toolbar */
.templates {
    display: flex;
    gap: 20px;
    height: 68px;
    padding: 14px 2px 0 12px;
    color: #8f8f8f;
}

.templates-label {
    width: 102px;
    margin-top: 2px;
    font-size: 22px;
}

.templates button,
.templates svg {
    width: 32px;
    height: 32px;
}

.templates .overflow {
    display: flex;
    justify-content: center;
    align-items: flex-end;
    width: 30px;
    height: 58px;
    margin: -12px 0 0 auto;
    padding: 0 0 6px 8px;
    background-color: #edf4fc;
    border-radius: 0 8px 8px 0;
}

.templates .overflow svg {
    width: 12px;
    height: 12px;
}

.abc-text {
    font-family: Roboto, "Liberation Sans", sans-serif;
    font-size: 16px;
    font-weight: bold;
    fill: #8a8a8a;
}

.k-text {
    font-family: Lato, "Liberation Sans", sans-serif;
    font-size: 24px;
    font-weight: bold;
    font-style: italic;
    fill: #fff;
}

.t-text {
    font-family: "Liberation Serif", serif;
    font-size: 17px;
    font-weight: bold;
    fill: #7d8c9b;
}

.q-text {
    font-size: 20px;
    font-weight: bold;
    fill: #fff;
}

/* Tabs */
.tabs {
    display: flex;
    align-items: flex-start;
    gap: 6px;
    padding: 0 8px;
    position: relative;
    z-index: 1;
}

.tab {
    display: flex;
    align-items: center;
    gap: 7px;
    height: 50px;
    padding: 2px 12px 0 14px;
    background-color: #dedede;
    border-radius: 12px 12px 0 0;
}

.tab.active {
    gap: 5px;
    height: 52px;
    margin-bottom: -2px;
    padding: 0 8px 0 12px;
    background-color: #fff;
    border: 2px solid #cbcbcb;
    border-bottom: none;
}

.tab svg {
    width: 28px;
    height: 30px;
}

/* Workspace */
.workspace {
    flex: 1;
    display: flex;
    min-height: 0;
    margin: 0 8px;
    border: 2px solid #cbcbcb;
    border-radius: 0 10px 10px 10px;
    overflow: hidden;
}

.list-panel {
    width: 528px;
    border-right: 2px solid #cbcbcb;
    background-color: #fff;
}

.list-tools {
    display: flex;
    align-items: center;
    gap: 26px;
    height: 66px;
    padding: 0 16px;
    background-color: #efefef;
    border-bottom: 2px solid #cbcbcb;
}

.list-tools svg {
    width: 32px;
    height: 32px;
}

.search {
    display: flex;
    align-items: center;
    gap: 10px;
    height: 54px;
    padding: 2px 0 0 10px;
    border-bottom: 2px solid #cbcbcb;
}

.search svg {
    width: 32px;
    height: 32px;
}

.search input {
    flex: 1;
    outline: none;
}

::placeholder {
    color: #858585;
    opacity: 1;
}

table {
    width: 100%;
    border-collapse: separate;
    border-spacing: 0;
}

th {
    height: 48px;
    padding: 2px 0 0;
    text-align: left;
    font-weight: normal;
    background: linear-gradient(#fff, #efefef);
}

td {
    height: 50px;
    padding: 2px 0 0;
    border-bottom: 2px solid #efefef;
}

.cell-icon {
    width: 50px;
    padding: 0 0 0 6px;
}

.cell-icon svg {
    width: 32px;
    height: 32px;
}

.person {
    padding-left: 3px;
}

.selected td {
    color: #fff;
    background-color: #0078d7;
    background-clip: padding-box;
}

.splitter {
    display: flex;
    flex-direction: column;
    justify-content: center;
    align-items: center;
    gap: 6px;
    width: 14px;
    background-color: #efefef;
}

.splitter i {
    width: 6px;
    height: 6px;
    border-radius: 50%;
    background-color: #d2d2d2;
}

/* Chat */
.chat-panel {
    flex: 1;
    min-width: 0;
    display: flex;
    flex-direction: column;
    border-left: 2px solid #cbcbcb;
}

.chat-tools,
.options {
    display: flex;
    align-items: center;
    height: 66px;
    padding: 0 6px;
    border-bottom: 2px solid #cbcbcb;
}

.square {
    display: flex;
    justify-content: center;
    align-items: center;
    width: 52px;
    height: 52px;
    border-radius: 10px;
    background-color: #dedede;
}

.square svg {
    width: 32px;
    height: 32px;
}

.service-label,
.model-label {
    margin: 0 16px;
}

.combo {
    position: relative;
}

.combo select {
    display: block;
    appearance: none;
    height: 52px;
    padding: 2px 54px 0 10px;
    border-radius: 10px;
    background-color: #dedede;
}

.combo svg {
    position: absolute;
    right: 12px;
    top: 19px;
    width: 28px;
    height: 14px;
    pointer-events: none;
}

.refresh {
    margin: 0 12px;
}

.check {
    display: flex;
    align-items: center;
    gap: 6px;
}

.check input {
    appearance: none;
    width: 36px;
    height: 34px;
    margin: 0;
    border: 2px solid #dedede;
    border-radius: 7px;
    background-color: #fff;
}

.check input:checked {
    background: #fff url("data:image/svg+xml,%3Csvg xmlns='http://www.w3.org/2000/svg' viewBox='0 0 20 18'%3E%3Cpath d='M1 10l5 6L19 1' fill='none' stroke='black' stroke-width='4'/%3E%3C/svg%3E") center / 20px 18px no-repeat;
}

.messages {
    flex: 1;
    min-height: 0;
    overflow: hidden;
    background-color: #fff;
}

.message {
    display: flex;
    gap: 19px;
    height: 125px;
    padding: 14px 19px;
    background-color: #f7f9fe;
}

.message.user {
    height: 126px;
    background-color: #d0e6ff;
}

.avatar {
    width: 40px;
    height: 48px;
    margin-top: 2px;
}

.user .avatar {
    height: 52px;
    margin-top: -1px;
}

.actions {
    display: flex;
    align-items: center;
    gap: 19px;
}

.actions time {
    width: 85px;
    font-size: 22px;
    opacity: 0.25;
}

.actions button {
    height: 38px;
    padding: 0 12px;
    border-radius: 12px;
    font-family: "Liberation Sans", Arial, sans-serif;
    font-size: 23px;
    color: #f5f9fe;
    background: linear-gradient(#c7ebfa, #c5e2f4);
}

.user .actions button {
    color: #d5eafe;
    background: linear-gradient(#a9dafb, #a6d2f8);
}

.user .actions .light {
    color: #6b7785;
    background: linear-gradient(#e6f1fe, #dfeaf7);
}

.message p {
    margin-top: 16px;
    font-size: 25px;
}

.composer {
    display: flex;
    align-items: center;
    gap: 20px;
    height: 104px;
    padding: 0 20px;
    border-top: 2px solid #cbcbcb;
    border-bottom: 2px solid #cbcbcb;
}

.composer input {
    flex: 1;
    height: 60px;
    padding: 4px 20px 0;
    border-radius: 20px;
    background-color: #fff;
}

.composer svg {
    width: 60px;
    height: 60px;
}

.options {
    height: 64px;
    padding-left: 16px;
    border-bottom: none;
}

.options .check {
    margin-right: 20px;
}

.options .check:nth-of-type(4) {
    margin-right: 8px;
}

.options a {
    color: #0066cc;
    text-decoration: none;
}

.options .square + .square {
    margin-left: 6px;
}

.statusbar {
    display: flex;
    justify-content: flex-end;
    align-items: flex-end;
    height: 54px;
    padding: 2px;
}

.statusbar svg {
    width: 30px;
    height: 30px;
}
```
